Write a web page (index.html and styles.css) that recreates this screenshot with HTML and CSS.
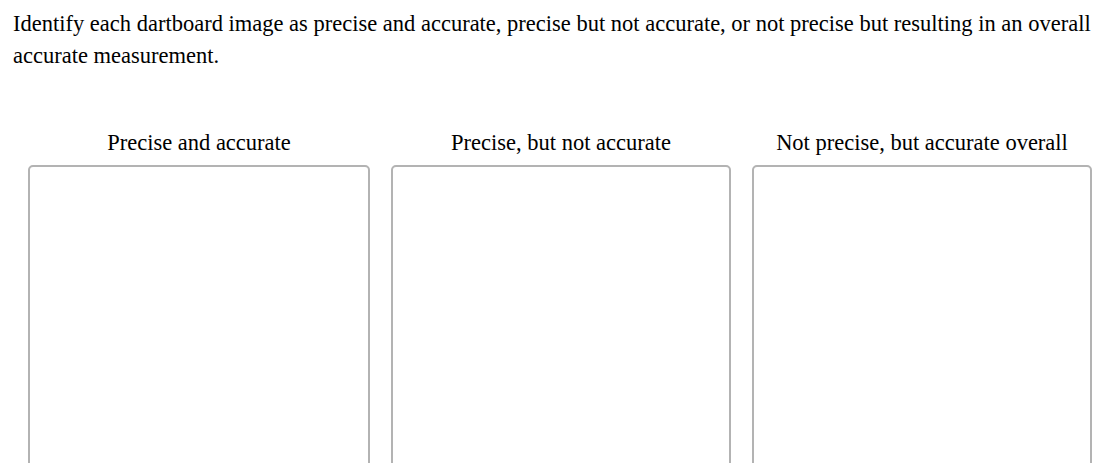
FILE: index.html
```html
<!DOCTYPE html>
<html lang="en">
<head>
    <meta charset="UTF-8">
    <meta name="viewport" content="width=device-width, initial-scale=1.0">
    <title>Dartboard Sorting</title>
    <link rel="stylesheet" href="styles.css">
</head>
<body>
    <p class="prompt">Identify each dartboard image as precise and accurate, precise but not accurate, or not precise but resulting in an overall accurate measurement.</p>

    <div class="bins">
        <div class="bin">
            <div class="bin-label">Precise and accurate</div>
            <div class="drop-zone"></div>
        </div>
        <div class="bin">
            <div class="bin-label">Precise, but not accurate</div>
            <div class="drop-zone"></div>
        </div>
        <div class="bin">
            <div class="bin-label">Not precise, but accurate overall</div>
            <div class="drop-zone"></div>
        </div>
    </div>
</body>
</html>
```

FILE: styles.css
```css
body {
    font-family: "Liberation Serif", "Times New Roman", serif;
    color: #000;
    background-color: #fff;
    margin: 0;
    padding: 8px 13px;
}
.prompt {
    font-size: 22.5px;
    line-height: 32px;
    margin: 0;
}
.bins {
    display: grid;
    grid-template-columns: 342px 340px 340px;
    column-gap: 21px;
    margin: 57px 0 0 15px;
}
.bin {
    display: flex;
    flex-direction: column;
    align-items: stretch;
}
.bin-label {
    font-size: 22.5px;
    line-height: 28px;
    text-align: center;
    margin-bottom: 8px;
}
.drop-zone {
    height: 320px;
    border: 2px solid #b3b3b3;
    border-radius: 5px;
    background-color: #fff;
}
```
